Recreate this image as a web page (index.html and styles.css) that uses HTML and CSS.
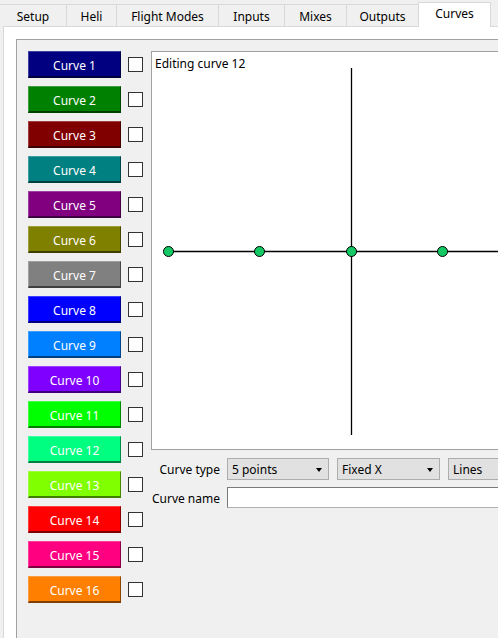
FILE: index.html
```html
<!DOCTYPE html>
<html>
<head>
<meta charset="utf-8">
<link rel="stylesheet" href="styles.css">
</head>
<body>
<div class="tabbar">
  <div class="tab t-setup">Setup</div>
  <div class="tab t-heli">Heli</div>
  <div class="tab t-fm">Flight Modes</div>
  <div class="tab t-inputs">Inputs</div>
  <div class="tab t-mixes">Mixes</div>
  <div class="tab t-outputs">Outputs</div>
  <div class="tab t-curves active">Curves</div>
</div>
<div class="pane">
  <div class="frame">
    <div class="curvelist">
      <div class="row"><div class="cbtn c1">Curve 1</div><div class="chk"></div></div>
      <div class="row"><div class="cbtn c2">Curve 2</div><div class="chk"></div></div>
      <div class="row"><div class="cbtn c3">Curve 3</div><div class="chk"></div></div>
      <div class="row"><div class="cbtn c4">Curve 4</div><div class="chk"></div></div>
      <div class="row"><div class="cbtn c5">Curve 5</div><div class="chk"></div></div>
      <div class="row"><div class="cbtn c6">Curve 6</div><div class="chk"></div></div>
      <div class="row"><div class="cbtn c7">Curve 7</div><div class="chk"></div></div>
      <div class="row"><div class="cbtn c8">Curve 8</div><div class="chk"></div></div>
      <div class="row"><div class="cbtn c9">Curve 9</div><div class="chk"></div></div>
      <div class="row"><div class="cbtn c10">Curve 10</div><div class="chk"></div></div>
      <div class="row"><div class="cbtn c11">Curve 11</div><div class="chk"></div></div>
      <div class="row"><div class="cbtn c12">Curve 12</div><div class="chk"></div></div>
      <div class="row"><div class="cbtn c13">Curve 13</div><div class="chk"></div></div>
      <div class="row"><div class="cbtn c14">Curve 14</div><div class="chk"></div></div>
      <div class="row"><div class="cbtn c15">Curve 15</div><div class="chk"></div></div>
      <div class="row"><div class="cbtn c16">Curve 16</div><div class="chk"></div></div>
    </div>
    <div class="editor">
      <div class="graph">
        <div class="graph-title">Editing curve 12</div>
        <svg class="plot" width="400" height="397" viewBox="0 0 400 397">
          <line x1="199.5" y1="16" x2="199.5" y2="383" stroke="#000" stroke-width="1.3"/>
          <line x1="16" y1="199.5" x2="400" y2="199.5" stroke="#000" stroke-width="1.3"/>
          <circle cx="16.5" cy="199.5" r="5" fill="#14c864" stroke="#000" stroke-width="1"/>
          <circle cx="107.5" cy="199.5" r="5" fill="#14c864" stroke="#000" stroke-width="1"/>
          <circle cx="199.5" cy="199.5" r="5" fill="#14c864" stroke="#000" stroke-width="1"/>
          <circle cx="290.5" cy="199.5" r="5" fill="#14c864" stroke="#000" stroke-width="1"/>
          <circle cx="382.5" cy="199.5" r="5" fill="#14c864" stroke="#000" stroke-width="1"/>
        </svg>
      </div>
      <div class="controls">
        <div class="lbl">Curve type</div>
        <div class="combos">
          <div class="combo w1"><span>5 points</span><i class="arrow"></i></div>
          <div class="combo w2"><span>Fixed X</span><i class="arrow"></i></div>
          <div class="combo w3"><span>Lines</span><i class="arrow"></i></div>
        </div>
        <div class="lbl">Curve name</div>
        <div class="textinput"></div>
      </div>
    </div>
  </div>
</div>
</body>
</html>
```

FILE: styles.css
```css
html, body {
  margin: 0;
  padding: 0;
}
body {
  width: 498px;
  height: 638px;
  overflow: hidden;
  background: #f0f0f0;
  font-family: "Noto Sans", "Open Sans", sans-serif;
  font-size: 12px;
  color: #000;
}
.tabbar {
  display: flex;
  align-items: flex-end;
  height: 26px;
  position: relative;
  z-index: 2;
}
.tab {
  box-sizing: border-box;
  height: 22px;
  border: 1px solid #d9d9d9;
  border-bottom: none;
  border-left: none;
  background: #f0f0f0;
  display: flex;
  align-items: center;
  justify-content: center;
  padding-top: 2px;
}
.t-setup { width: 67px; border-left: none; }
.t-heli { width: 50px; }
.t-fm { width: 102px; }
.t-inputs { width: 66px; }
.t-mixes { width: 62px; }
.t-outputs { width: 72px; }
.t-curves {
  width: 73px;
  height: 25px;
  margin-bottom: -1px;
  background: #fff;
  border-left: 1px solid #d9d9d9;
  margin-left: -1px;
  padding-top: 0;
  padding-bottom: 3px;
}
.pane {
  box-sizing: border-box;
  margin-left: 3px;
  height: 612px;
  border-left: 1px solid #d9d9d9;
  border-top: 1px solid #d9d9d9;
  background: #fff;
  padding: 12px 0 0 12px;
}
.frame {
  box-sizing: border-box;
  height: 600px;
  border-left: 1px solid #a0a0a0;
  border-top: 1px solid #a0a0a0;
  background: #f0f0f0;
  padding: 11px 0 0 11px;
  display: flex;
  gap: 8px;
  overflow: hidden;
}
.curvelist {
  display: flex;
  flex-direction: column;
  gap: 8px;
  flex: none;
}
.row {
  display: flex;
  align-items: center;
  gap: 7px;
}
.cbtn {
  box-sizing: border-box;
  width: 93px;
  height: 27px;
  color: #fff;
  display: flex;
  align-items: center;
  justify-content: center;
  border-top: 1px solid rgba(255,255,255,0.25);
  border-left: 1px solid rgba(255,255,255,0.25);
  border-right: 1px solid rgba(0,0,0,0.45);
  border-bottom: 2px solid rgba(0,0,0,0.5);
  padding-top: 3px;
}
.c1 { background: #000080; }
.c2 { background: #008000; }
.c3 { background: #800000; }
.c4 { background: #008080; }
.c5 { background: #800080; }
.c6 { background: #808000; }
.c7 { background: #808080; }
.c8 { background: #0000ff; }
.c9 { background: #0080ff; }
.c10 { background: #8000ff; }
.c11 { background: #00ff00; }
.c12 { background: #00ff80; }
.c13 { background: #80ff00; }
.c14 { background: #ff0000; }
.c15 { background: #ff0080; }
.c16 { background: #ff8000; }
.chk {
  box-sizing: border-box;
  width: 15px;
  height: 15px;
  border: 1px solid #333;
  background: #fff;
}
.editor {
  flex: none;
  width: 420px;
  display: flex;
  flex-direction: column;
}
.graph {
  position: relative;
  box-sizing: border-box;
  width: 402px;
  height: 399px;
  border: 1px solid #a0a0a0;
  background: #fff;
}
.plot {
  display: block;
}
.graph-title {
  position: absolute;
  left: 3px;
  top: 4px;
  line-height: 16px;
}
.controls {
  margin-top: 8px;
  display: grid;
  grid-template-columns: 69px 1fr;
  column-gap: 7px;
  row-gap: 7px;
  align-items: center;
}
.lbl {
  text-align: right;
  white-space: nowrap;
  padding-top: 1px;
}
.combos {
  display: flex;
  gap: 8px;
}
.combo {
  box-sizing: border-box;
  height: 22px;
  background: #e1e1e1;
  border: 1px solid #adadad;
  display: flex;
  align-items: center;
  justify-content: space-between;
  padding: 1px 6px 0 4px;
}
.w1 { width: 102px; }
.w2 { width: 103px; }
.w3 { width: 102px; }
.arrow {
  width: 0;
  height: 0;
  border-left: 3.5px solid transparent;
  border-right: 3.5px solid transparent;
  border-top: 4px solid #000;
}
.textinput {
  box-sizing: border-box;
  height: 21px;
  width: 300px;
  background: #fff;
  border: 1px solid #7a7a7a;
  border-bottom-color: #b0b0b0;
}
```
